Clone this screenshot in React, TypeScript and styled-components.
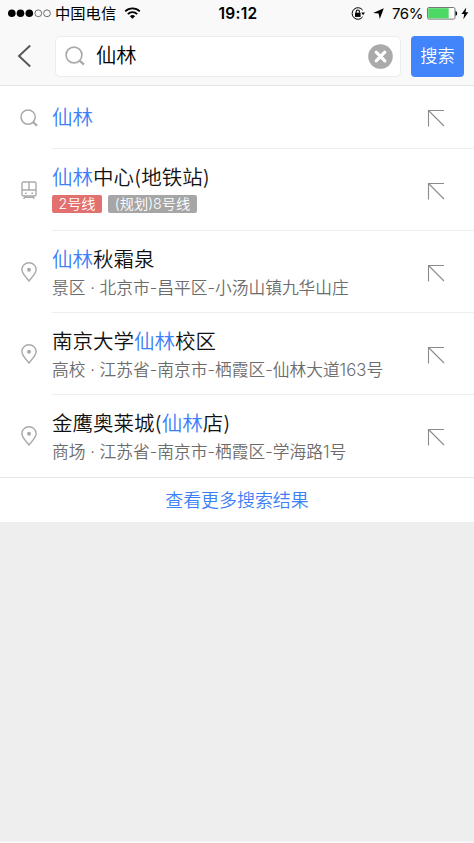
import React from 'react';
import styled, { createGlobalStyle } from 'styled-components';

const GlobalStyle = createGlobalStyle`
  * { box-sizing: border-box; }
  body {
    margin: 0;
    background: #eee;
    font-family: Inter, "Noto Sans CJK SC", sans-serif;
    -webkit-font-smoothing: antialiased;
  }
  svg { display: block; flex: none; }
`;

const Screen = styled.div`
  width: 474px;
  height: 843px;
  display: flex;
  flex-direction: column;
  overflow: hidden;
  background: #eee;
  border-bottom: 2px solid #f7f7f7;
`;

const Header = styled.header`
  height: 86px;
  flex: none;
  background: #f9f9f9;
  border-bottom: 1px solid #e3e3e3;
`;

const StatusBar = styled.div`
  display: grid;
  grid-template-columns: 1fr auto 1fr;
  align-items: center;
  height: 27px;
  padding: 0 5px 0 8px;
  color: #000;
  font-size: 15.5px;
  line-height: 27px;
`;

const StatusGroup = styled.div<{ $end?: boolean }>`
  display: flex;
  align-items: center;
  justify-content: ${(p) => (p.$end ? 'flex-end' : 'flex-start')};
`;

const Carrier = styled.span`
  margin: 0 8px 0 4px;
  font-size: 15.3px;
`;

const Clock = styled.span`
  margin-left: -1px;
  font-size: 15.5px;
  font-weight: 600;
  letter-spacing: 0.3px;
`;

const Percent = styled.span`
  margin: 0 4px 0 8px;
  font-size: 15px;
  letter-spacing: -0.4px;
`;

const SearchBar = styled.div`
  display: flex;
  align-items: center;
  height: 58px;
  padding: 0 10px 0 17px;
`;

const SearchField = styled.div`
  display: flex;
  align-items: center;
  width: 346px;
  height: 41px;
  margin: 0 10px 0 23px;
  padding: 0 7px 0 9px;
  background: #fff;
  border: 1px solid #ececec;
  border-radius: 5px;
`;

const Query = styled.span`
  flex: 1;
  margin-left: 11px;
  color: #000;
  font-size: 20.3px;
  font-weight: 350;
  line-height: 38px;
`;

const SearchButton = styled.button`
  width: 53px;
  height: 41px;
  padding: 0;
  border: 0;
  border-radius: 4px;
  background: #4285fb;
  color: #fff;
  font: 350 17.2px/40px Inter, "Noto Sans CJK SC", sans-serif;
`;

const Results = styled.main`
  flex: none;
  background: #fff;
`;

const Row = styled.div<{ $compact?: boolean }>`
  display: grid;
  grid-template-columns: 52px 1fr;
  height: ${(p) => (p.$compact ? 63 : 82.1)}px;
`;

const IconCell = styled.div`
  display: flex;
  align-items: center;
  justify-content: center;
  padding-left: 6px;
`;

const RowBody = styled.div<{ $last?: boolean }>`
  display: flex;
  align-items: center;
  justify-content: space-between;
  padding: 2px 29px 0 0;
  border-bottom: 1px solid ${(p) => (p.$last ? 'transparent' : '#eee')};
`;

const Lines = styled.div`
  display: flex;
  flex-direction: column;
  white-space: nowrap;
`;

const Title = styled.div`
  color: #111;
  font-size: 20.5px;
  font-weight: 350;
  line-height: 30px;
`;

const Match = styled.span`
  color: #3d7ff8;
`;

const Address = styled.div`
  color: #6c6c6c;
  font-size: 16.73px;
  font-weight: 350;
  line-height: 26px;
`;

const Tags = styled.div`
  display: flex;
  gap: 6px;
  padding: 2px 0 6px;
`;

const Tag = styled.span<{ $color: string; $width: number }>`
  width: ${(p) => p.$width}px;
  height: 18px;
  border-radius: 2px;
  background: ${(p) => p.$color};
  color: #fff;
  font-size: 14.2px;
  font-weight: 350;
  line-height: 17px;
  text-align: center;
`;

const More = styled.div`
  height: 45px;
  border-top: 1px solid #e8e8e8;
  color: #3d7ff8;
  font-size: 17.95px;
  font-weight: 350;
  line-height: 45px;
  text-align: center;
`;

const SignalDots = () => (
  <svg width="43" height="10" viewBox="0 0 43 10">
    {[3.8, 12.5, 21.3].map((x) => (
      <circle key={x} cx={x} cy="4.3" r="3.8" fill="#000" />
    ))}
    {[30.3, 39].map((x) => (
      <circle key={x} cx={x} cy="4.3" r="3.4" fill="none" stroke="#333" strokeWidth=".7" />
    ))}
  </svg>
);

const Wifi = () => (
  <svg width="17" height="13" viewBox="0 0 17 13" fill="none" stroke="#000" strokeWidth="1.8">
    <path d="M1.2 4.3a10.5 10.5 0 0 1 14.6 0M3.8 7.1a6.8 6.8 0 0 1 9.4 0" />
    <path d="M5.9 9.3a3.8 3.8 0 0 1 5.2 0L8.5 11.8z" fill="#000" stroke="none" />
  </svg>
);

const RotationLock = () => (
  <svg width="22" height="14" viewBox="0 0 22 14" fill="none" stroke="#000">
    <path d="M11.7 3.2A5.8 5.8 0 1 0 11.7 9.8" />
    <path d="M10.2 5.6h3.8l-1.9 2.6z" fill="#000" stroke="none" />
    <rect x="4" y="5.7" width="5.6" height="4.2" fill="#000" stroke="none" />
    <path d="M5.2 5.8V4.6a1.6 1.6 0 0 1 3.2 0v1.2" strokeWidth="1.1" />
  </svg>
);

const LocationArrow = () => (
  <svg width="11" height="11" viewBox="0 0 11 11">
    <path d="M10.8.2 6.8 10.9 5.6 5.4.1 5z" fill="#000" />
  </svg>
);

const Battery = () => (
  <svg width="34" height="13" viewBox="0 0 34 13">
    <rect x=".5" y=".5" width="27.5" height="11.6" rx="1.5" fill="#fff" stroke="#777" />
    <path d="M1.2 1.2h20.5v10.2H1.2z" fill="#4cd964" />
    <path d="M28.5 4c2.2.6 2.2 4.2 0 4.8z" fill="#000" />
  </svg>
);

const Bolt = () => (
  <svg width="8" height="13" viewBox="0 0 8 13">
    <path d="M5.2.5.5 7h2.8l-1 5.3 5-7H4.5z" fill="#000" />
  </svg>
);

const Back = () => (
  <svg width="15" height="24" viewBox="0 0 15 24" fill="none" stroke="#555" strokeWidth="1.9">
    <path d="M13.2 1.5 2 12l11.2 10.5" />
  </svg>
);

const Magnifier = ({ size, color }: { size: number; color: string }) => (
  <svg width={size} height={size} viewBox="0 0 20 20" fill="none" stroke={color} strokeWidth="1.7">
    <circle cx="9" cy="9" r="7.9" />
    <path d="m14.6 14.6 4.4 4" strokeWidth="2.4" />
  </svg>
);

const Clear = () => (
  <svg width="25" height="25" viewBox="0 0 25 25">
    <circle cx="12.5" cy="12.5" r="12.3" fill="#aaa" />
    <path d="m8.2 8.2 8.6 8.6m0-8.6-8.6 8.6" stroke="#fff" strokeWidth="3.2" strokeLinecap="round" />
  </svg>
);

const Train = () => (
  <svg width="16" height="19" viewBox="0 0 16 19" fill="none" stroke="#aaa" strokeWidth="1.4">
    <rect x="1" y="1" width="14" height="14" rx="1.5" />
    <path d="M1 9h14M8 1v8M4.3 15l-1.6 3M11.7 15l1.6 3M3.5 16.3h9" />
    <path d="M4 12.2h1.6m4.8 0h1.6" strokeWidth="1.6" />
  </svg>
);

const Pin = () => (
  <svg width="16" height="20" viewBox="0 0 16 20" fill="none" stroke="#aaa" strokeWidth="1.4">
    <path d="M8 19C6 16.2.9 12 .9 7.6a7.1 6.8 0 0 1 14.2 0C15.1 12 10 16.2 8 19z" />
    <circle cx="8" cy="7.8" r="2" fill="#aaa" stroke="none" />
  </svg>
);

const FillArrow = () => (
  <svg width="18" height="18" viewBox="0 0 18 18" fill="none" stroke="#8b8b8b" strokeWidth="1.1">
    <path d="M17 1.5H1.5v16M1.5 1.5 17 17" />
  </svg>
);

interface Place {
  title: React.ReactNode;
  address: string;
}

const places: Place[] = [
  { title: <><Match>仙林</Match>秋霜泉</>, address: '景区 · 北京市-昌平区-小汤山镇九华山庄' },
  { title: <>南京大学<Match>仙林</Match>校区</>, address: '高校 · 江苏省-南京市-栖霞区-仙林大道163号' },
  { title: <>金鹰奥莱城(<Match>仙林</Match>店)</>, address: '商场 · 江苏省-南京市-栖霞区-学海路1号' },
];

export default function App() {
  return (
    <>
      <GlobalStyle />
      <Screen>
        <Header>
          <StatusBar>
            <StatusGroup>
              <SignalDots />
              <Carrier>中国电信</Carrier>
              <Wifi />
            </StatusGroup>
            <Clock>19:12</Clock>
            <StatusGroup $end>
              <RotationLock />
              <LocationArrow />
              <Percent>76%</Percent>
              <Battery />
              <Bolt />
            </StatusGroup>
          </StatusBar>
          <SearchBar>
            <Back />
            <SearchField>
              <Magnifier size={20} color="#aaa" />
              <Query>仙林</Query>
              <Clear />
            </SearchField>
            <SearchButton>搜索</SearchButton>
          </SearchBar>
        </Header>
        <Results>
          <Row $compact>
            <IconCell><Magnifier size={18} color="#aaa" /></IconCell>
            <RowBody>
              <Title><Match>仙林</Match></Title>
              <FillArrow />
            </RowBody>
          </Row>
          <Row>
            <IconCell><Train /></IconCell>
            <RowBody>
              <Lines>
                <Title><Match>仙林</Match>中心(地铁站)</Title>
                <Tags>
                  <Tag $color="#e2706f" $width={50}>2号线</Tag>
                  <Tag $color="#a6a6a6" $width={89}>(规划)8号线</Tag>
                </Tags>
              </Lines>
              <FillArrow />
            </RowBody>
          </Row>
          {places.map((place, i) => (
            <Row key={place.address}>
              <IconCell><Pin /></IconCell>
              <RowBody $last={i === places.length - 1}>
                <Lines>
                  <Title>{place.title}</Title>
                  <Address>{place.address}</Address>
                </Lines>
                <FillArrow />
              </RowBody>
            </Row>
          ))}
          <More>查看更多搜索结果</More>
        </Results>
      </Screen>
    </>
  );
}
